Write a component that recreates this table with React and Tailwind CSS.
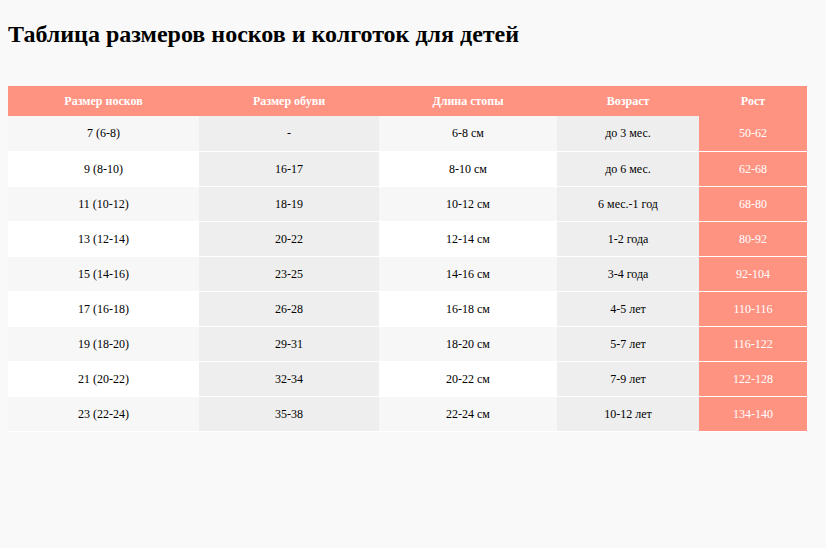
// Таблица размеров носков и колготок для детей

const rows = [
  ['7 (6-8)', '-', '6-8 см', 'до 3 мес.', '50-62'],
  ['9 (8-10)', '16-17', '8-10 см', 'до 6 мес.', '62-68'],
  ['11 (10-12)', '18-19', '10-12 см', '6 мес.-1 год', '68-80'],
  ['13 (12-14)', '20-22', '12-14 см', '1-2 года', '80-92'],
  ['15 (14-16)', '23-25', '14-16 см', '3-4 года', '92-104'],
  ['17 (16-18)', '26-28', '16-18 см', '4-5 лет', '110-116'],
  ['19 (18-20)', '29-31', '18-20 см', '5-7 лет', '116-122'],
  ['21 (20-22)', '32-34', '20-22 см', '7-9 лет', '122-128'],
  ['23 (22-24)', '35-38', '22-24 см', '10-12 лет', '134-140'],
]

const headers = ['Размер носков', 'Размер обуви', 'Длина стопы', 'Возраст', 'Рост']
const widths = ['w-[191px]', 'w-[180px]', 'w-[178px]', 'w-[142px]', 'w-[108px]']

export default function App() {
  return (
    <div className="min-h-[548px] bg-[#f9f9f9] px-2 pt-[20px] font-['Liberation_Serif','Times_New_Roman',serif] text-black">
      <h2 className="text-[24px] font-bold leading-[28px]">Таблица размеров носков и колготок для детей</h2>

      <table className="mt-[38px] w-[799px] table-fixed border-collapse text-[12px]">
        <thead>
          <tr className="bg-[#ff9382] text-white">
            {headers.map((h, i) => (
              <th key={h} className={`${widths[i]} h-[30px] p-0 text-center font-bold`}>
                {h}
              </th>
            ))}
          </tr>
        </thead>
        <tbody>
          {rows.map((r, ri) => (
            <tr key={r[0]} className={ri % 2 === 0 ? 'bg-[#f7f7f7]' : 'bg-white'}>
              {r.map((c, ci) => (
                <td
                  key={ci}
                  className={`h-[35px] border-b border-white p-0 text-center ${
                    ci === 4
                      ? 'bg-[#ff9382] text-white'
                      : ci === 1 || ci === 3
                        ? 'bg-[#eeeeee]'
                        : ''
                  }`}
                >
                  {c}
                </td>
              ))}
            </tr>
          ))}
        </tbody>
      </table>
    </div>
  )
}
